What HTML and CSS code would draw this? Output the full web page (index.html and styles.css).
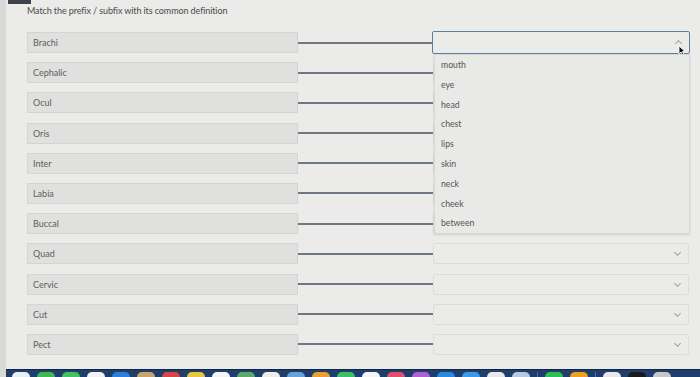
FILE: index.html
```html
<!DOCTYPE html>
<html lang="en">

<head>
    <meta charset="UTF-8">
    <meta name="viewport" content="width=device-width, initial-scale=1.0">
    <title>Matching</title>
    <link rel="stylesheet" href="styles.css">
</head>

<body>
    <div class="screen">
        <div class="tab-mark"></div>
        <main class="quiz">
            <p class="prompt">Match the prefix / subfix with its common definition</p>
            <ul class="rows">
                <li class="row">
                    <div class="term">Brachi</div>
                    <div class="link"></div>
                    <div class="pick open">
                        <span class="chev up"></span>
                        <ul class="options">
                            <li>mouth</li>
                            <li>eye</li>
                            <li>head</li>
                            <li>chest</li>
                            <li>lips</li>
                            <li>skin</li>
                            <li>neck</li>
                            <li>cheek</li>
                            <li>between</li>
                        </ul>
                        <svg class="cursor" width="8" height="11" viewBox="0 0 8 11">
                            <path d="M1 1 L1 9 L3 7 L4.5 10 L5.8 9.4 L4.4 6.5 L7 6.5 Z" fill="#111" stroke="#fff" stroke-width="0.8"/>
                        </svg>
                    </div>
                </li>
                <li class="row"><div class="term">Cephalic</div><div class="link"></div><div class="pick"><span class="chev"></span></div></li>
                <li class="row"><div class="term">Ocul</div><div class="link"></div><div class="pick"><span class="chev"></span></div></li>
                <li class="row"><div class="term">Oris</div><div class="link"></div><div class="pick"><span class="chev"></span></div></li>
                <li class="row"><div class="term">Inter</div><div class="link"></div><div class="pick"><span class="chev"></span></div></li>
                <li class="row"><div class="term">Labia</div><div class="link"></div><div class="pick"><span class="chev"></span></div></li>
                <li class="row"><div class="term">Buccal</div><div class="link"></div><div class="pick"><span class="chev"></span></div></li>
                <li class="row"><div class="term">Quad</div><div class="link"></div><div class="pick"><span class="chev"></span></div></li>
                <li class="row"><div class="term">Cervic</div><div class="link"></div><div class="pick"><span class="chev"></span></div></li>
                <li class="row"><div class="term">Cut</div><div class="link"></div><div class="pick"><span class="chev"></span></div></li>
                <li class="row"><div class="term">Pect</div><div class="link"></div><div class="pick"><span class="chev"></span></div></li>
            </ul>
        </main>
        <footer class="dock">
            <span class="app" style="background:#e8eef5"></span>
            <span class="app" style="background:#3fb950"></span>
            <span class="app" style="background:#43c35a"></span>
            <span class="app" style="background:#f2f2f2"></span>
            <span class="app" style="background:#2e7fd9"></span>
            <span class="app" style="background:#c9a46a"></span>
            <span class="app" style="background:#d94545"></span>
            <span class="app" style="background:#e8c840"></span>
            <span class="app" style="background:#f4f4f4"></span>
            <span class="app" style="background:#5fa86a"></span>
            <span class="app" style="background:#f0ede6"></span>
            <span class="app" style="background:#6aa0d8"></span>
            <span class="app" style="background:#e8a030"></span>
            <span class="app" style="background:#3cc060"></span>
            <span class="app" style="background:#f5f5f5"></span>
            <span class="app" style="background:#e0506a"></span>
            <span class="app" style="background:#b060d0"></span>
            <span class="app" style="background:#2a8ae0"></span>
            <span class="app" style="background:#3a9ae8"></span>
            <span class="app" style="background:#e8e8ea"></span>
            <span class="app" style="background:#b8c8e0"></span>
            <span class="sep"></span>
            <span class="app" style="background:#30c050"></span>
            <span class="app" style="background:#f0a020"></span>
            <span class="sep"></span>
            <span class="app" style="background:#e8e8e8"></span>
            <span class="app" style="background:#1a1a1a"></span>
            <span class="app" style="background:#c8c8c8"></span>
        </footer>
    </div>
</body>

</html>
```

FILE: styles.css
```css
* {
    margin: 0;
    padding: 0;
    box-sizing: border-box;
}

body {
    background: #ebebe9;
    font-family: Lato, "Open Sans", sans-serif;
    color: #585858;
    overflow: hidden;
}

.screen {
    position: relative;
    height: 377px;
    border-left: 6px solid #d9d9d7;
}

.tab-mark {
    position: absolute;
    top: 0;
    left: 2px;
    width: 23px;
    height: 4px;
    background: #3d434b;
}

.quiz {
    padding: 6px 0 0 21px;
    height: 369px;
}

.prompt {
    font-size: 9px;
    color: #4a4a4a;
    line-height: 10px;
    letter-spacing: -0.1px;
}

.rows {
    list-style: none;
    margin-top: 16px;
    display: flex;
    flex-direction: column;
    gap: 9.2px;
}

.row {
    display: flex;
    align-items: center;
    height: 21px;
}

.term {
    width: 271px;
    height: 21px;
    background: #e0e0de;
    border: 1px solid #d4d4d2;
    font-size: 9px;
    line-height: 19px;
    padding-left: 5px;
    color: #5e5e5e;
}

.link {
    width: 135px;
    height: 2px;
    background: #6e7883;
}

.pick {
    position: relative;
    width: 256px;
    height: 21px;
    border: 1px solid #dcdcda;
    border-radius: 2px;
    background: #ebebe9;
}

.pick.open {
    width: 258px;
    height: 23px;
    margin-left: -1px;
    border: 1px solid #5d7fa6;
}

.chev {
    position: absolute;
    right: 8px;
    top: 6px;
    width: 5px;
    height: 5px;
    border-right: 1px solid #a0a0a0;
    border-bottom: 1px solid #a0a0a0;
    transform: rotate(45deg);
}

.chev.up {
    top: 9px;
    right: 8px;
    transform: rotate(-135deg);
}

.options {
    position: absolute;
    top: 22px;
    left: 1px;
    width: 256px;
    list-style: none;
    background: #e9e9e7;
    border: 1px solid #d8d8d6;
    box-shadow: 0 1px 2px rgba(0, 0, 0, 0.12);
    z-index: 2;
}

.options li {
    height: 19.8px;
    line-height: 19.8px;
    font-size: 8.7px;
    padding-left: 6px;
    color: #555;
}

.cursor {
    position: absolute;
    right: 3px;
    top: 13px;
    z-index: 3;
}

.dock {
    display: flex;
    align-items: flex-start;
    gap: 7px;
    height: 8px;
    overflow: hidden;
    padding: 2px 0 0 6px;
    background: #1f3e6c;
    border-top: 1px solid #102648;
}

.app {
    flex: none;
    width: 18px;
    height: 18px;
    border-radius: 5px;
}

.sep {
    flex: none;
    width: 1px;
    height: 8px;
    background: #5a7098;
}
```
